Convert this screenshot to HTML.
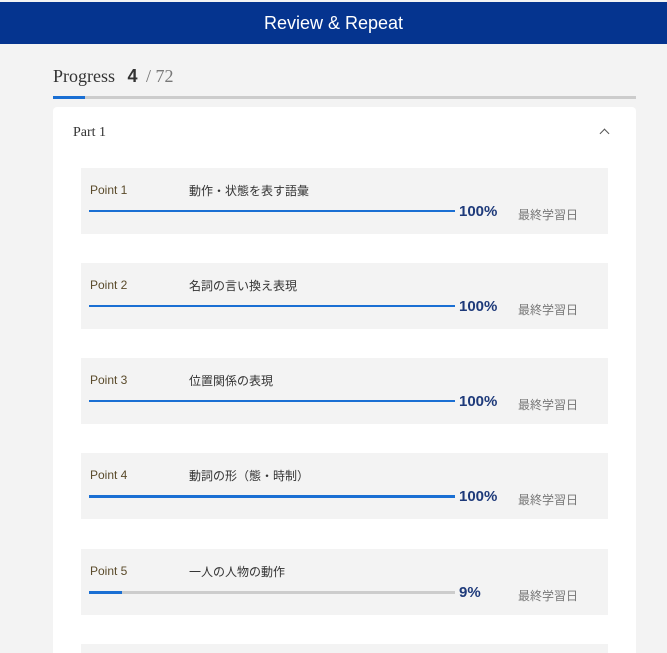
<!DOCTYPE html>
<html><head><meta charset="utf-8"><style>
*{margin:0;padding:0;box-sizing:border-box}
html,body{width:667px;height:653px;overflow:hidden}
body{background:#f3f3f3;font-family:"Liberation Sans","Noto Sans CJK JP",sans-serif;position:relative}
.hdr{position:absolute;left:0;top:2px;width:667px;height:42px;background:#05348f;color:#fff;font-size:18px;text-align:center;line-height:42px}
.prog{position:absolute;left:53px;top:66px;font-family:"Liberation Serif","Noto Serif CJK SC",serif;font-size:18px;color:#333}
.prog b{font-family:"Liberation Sans",sans-serif;margin-left:8px;margin-right:4px}
.prog span{color:#777}
.pbar{position:absolute;left:53px;top:96px;width:583px;height:3px;background:#ccc}
.pbar i{position:absolute;left:0;top:0;width:32px;height:3px;background:#1a6fd3}
.card{position:absolute;left:53px;top:107px;width:583px;height:546px;background:#fff;border-radius:4px 4px 0 0;overflow:hidden}
.part{position:absolute;left:20px;top:18px;font-family:"Liberation Serif",serif;font-size:14px;color:#333}
.chev{position:absolute;left:548px;top:23px;width:7px;height:7px;border-left:1.5px solid #555;border-top:1.5px solid #555;transform:rotate(45deg)}
.row{position:absolute;left:28px;width:527px;height:66px;background:#f3f3f3}
.pt{position:absolute;left:9px;top:15px;font-size:12px;color:#5a4a2a}
.tt{position:absolute;left:108px;top:14px;font-size:12px;color:#333}
.bar{position:absolute;left:8px;top:42px;width:366px;height:2px;background:#1a6fd3}
.pc{position:absolute;left:378px;top:35px;font-size:15px;font-weight:bold;color:#1e3a7a}
.dt{position:absolute;left:437px;top:38px;font-size:12px;color:#777}
</style></head><body>
<div class="hdr">Review &amp; Repeat</div>
<div class="prog">Progress <b>4</b> <span>/ 72</span></div>
<div class="pbar"><i></i></div>
<div class="card">
<div class="part">Part 1</div><div class="chev"></div>
<div class="row" style="top:61px"><div class="pt">Point 1</div><div class="tt">動作・状態を表す語彙</div><div class="bar"></div><div class="pc">100%</div><div class="dt">最終学習日</div></div>
<div class="row" style="top:156px"><div class="pt">Point 2</div><div class="tt">名詞の言い換え表現</div><div class="bar"></div><div class="pc">100%</div><div class="dt">最終学習日</div></div>
<div class="row" style="top:251px"><div class="pt">Point 3</div><div class="tt">位置関係の表現</div><div class="bar"></div><div class="pc">100%</div><div class="dt">最終学習日</div></div>
<div class="row" style="top:346px"><div class="pt">Point 4</div><div class="tt">動詞の形（態・時制）</div><div class="bar" style="height:3px"></div><div class="pc">100%</div><div class="dt">最終学習日</div></div>
<div class="row" style="top:442px"><div class="pt">Point 5</div><div class="tt">一人の人物の動作</div><div class="bar" style="height:3px;background:#ccc"><div style="width:33px;height:3px;background:#1a6fd3"></div></div><div class="pc">9%</div><div class="dt">最終学習日</div></div>
<div class="row" style="top:537px;height:9px"></div>
</div>
</body></html>
